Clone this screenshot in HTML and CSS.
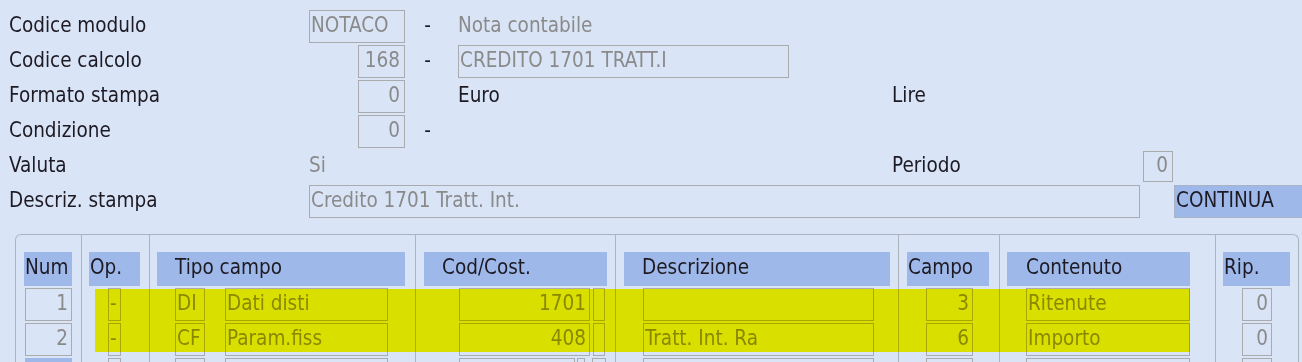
FILE: index.html
```html
<!DOCTYPE html>
<html>
<head>
  <link rel="stylesheet" href="styles.css">
</head>
<body>

<div class="form">
  <div class="lbl">Codice modulo</div>
  <div class="fld wide">NOTACO</div>
  <div class="dash">-</div>
  <div class="val">Nota contabile</div>
  <div></div><div></div><div></div>

  <div class="lbl">Codice calcolo</div>
  <div class="fld num">168</div>
  <div class="dash">-</div>
  <div class="fld desc">CREDITO 1701 TRATT.I</div>
  <div></div><div></div><div></div>

  <div class="lbl">Formato stampa</div>
  <div class="fld num">0</div>
  <div></div>
  <div class="lbl">Euro</div>
  <div class="lbl">Lire</div>
  <div></div><div></div>

  <div class="lbl">Condizione</div>
  <div class="fld num">0</div>
  <div class="dash">-</div>
  <div></div><div></div><div></div><div></div>

  <div class="lbl">Valuta</div>
  <div class="val">Si</div>
  <div></div><div></div>
  <div class="lbl">Periodo</div>
  <div class="fld small">0</div>
  <div></div>

  <div class="lbl">Descriz. stampa</div>
  <div class="fld long">Credito 1701 Tratt. Int.</div>
  <div class="btn">CONTINUA</div>
</div>

<div class="grid">
  <div class="col c1">
    <div class="hd">Num</div>
    <div class="row"><div class="fld num w47">1</div></div>
    <div class="row"><div class="fld num w47">2</div></div>
    <div class="row"><div class="fld num w47 sel"></div></div>
  </div>
  <div class="col c2">
    <div class="hd">Op.</div>
    <div class="row"><div class="fld w13">-</div></div>
    <div class="row"><div class="fld w13">-</div></div>
    <div class="row"><div class="fld w13"></div></div>
  </div>
  <div class="col c3">
    <div class="hd pad">Tipo campo</div>
    <div class="row"><div class="fld w30">DI</div><div class="fld w163 gap20">Dati disti</div></div>
    <div class="row"><div class="fld w30">CF</div><div class="fld w163 gap20">Param.fiss</div></div>
    <div class="row"><div class="fld w30"></div><div class="fld w163 gap20"></div></div>
  </div>
  <div class="col c4">
    <div class="hd pad">Cod/Cost.</div>
    <div class="row"><div class="fld num w131">1701</div><div class="fld w12 gap3"></div></div>
    <div class="row"><div class="fld num w131">408</div><div class="fld w12 gap3"></div></div>
    <div class="row"><div class="fld num w116"></div><div class="fld w8 gap2"></div><div class="fld w14 gap7"></div></div>
  </div>
  <div class="col c5">
    <div class="hd pad">Descrizione</div>
    <div class="row"><div class="fld w231"></div></div>
    <div class="row"><div class="fld w231">Tratt. Int. Ra</div></div>
    <div class="row"><div class="fld w231"></div></div>
  </div>
  <div class="col c6">
    <div class="hd">Campo</div>
    <div class="row"><div class="fld num w47">3</div></div>
    <div class="row"><div class="fld num w47">6</div></div>
    <div class="row"><div class="fld num w47"></div></div>
  </div>
  <div class="col c7">
    <div class="hd pad">Contenuto</div>
    <div class="row"><div class="fld w164">Ritenute</div></div>
    <div class="row"><div class="fld w164">Importo</div></div>
    <div class="row"><div class="fld w164"></div></div>
  </div>
  <div class="col c8">
    <div class="hd">Rip.</div>
    <div class="row"><div class="fld num w30">0</div></div>
    <div class="row"><div class="fld num w30">0</div></div>
    <div class="row"><div class="fld num w30"></div></div>
  </div>
  <div class="highlight"></div>
</div>

</body>
</html>
```
FILE: styles.css
```css
* {box-sizing: border-box}

body {
  margin: 0;
  padding: 9px 0 0 9px;
  background: #d9e5f7;
  font-family: "DejaVu Sans Condensed", "DejaVu Sans", sans-serif;
  font-size: 20.5px;
  color: #1e1a24;
  overflow: hidden;
}

.form {
  display: grid;
  grid-template-columns: 300px 96px 53px 434px 251px 31px 128px;
  grid-auto-rows: 35px;
  align-items: center;
}

.lbl {
  white-space: nowrap;
  padding-bottom: 4px;
}

.dash, .val {
  padding-bottom: 4px;
}

.dash {
  text-align: center;
  padding-right: 8px;
}

.val {
  color: #8a8a8a;
  white-space: nowrap;
}

.fld {
  height: 33px;
  line-height: 29px;
  border: 1px solid #a9abae;
  color: #8a8a8a;
  padding: 0 4px 0 1px;
  white-space: nowrap;
  overflow: hidden;
}

.num {
  text-align: right;
}

.form .num {
  width: 47px;
  justify-self: end;
}

.wide {
  width: 96px;
}

.desc {
  width: 331px;
}

.small {
  width: 30px;
  height: 31px;
  line-height: 27px;
  text-align: right;
}

.long {
  grid-column: 2 / 6;
  width: 831px;
}

.btn {
  grid-column: 7;
  height: 33px;
  line-height: 29px;
  background: #9eb9e9;
  border: 1px solid #a9b3c4;
  padding-left: 1px;
  margin-right: -9px;
  white-space: nowrap;
}

/* lower table */
.grid {
  position: relative;
  display: flex;
  margin: 15px 0 0 6px;
  width: 1284px;
  height: 140px;
  border: 1px solid #aeb4bd;
  border-bottom: none;
  border-radius: 6px 6px 0 0;
}

.col {
  padding-top: 17px;
  border-left: 1px solid #aeb4bd;
}

.c1 {border-left: none; width: 65px; padding-left: 8px}
.c2 {width: 68px; padding-left: 7px}
.c3 {width: 266px; padding-left: 7px}
.c4 {width: 200px; padding-left: 8px}
.c5 {width: 283px; padding-left: 8px}
.c6 {width: 101px; padding-left: 8px}
.c7 {width: 216px; padding-left: 7px}
.c8 {flex: 1; padding-left: 7px}

.hd {
  height: 34px;
  line-height: 31px;
  background: #9eb9e9;
  padding-left: 1px;
  white-space: nowrap;
}

.c1 .hd {width: 48px}
.c2 .hd {width: 51px}
.c3 .hd {width: 248px}
.c4 .hd {width: 183px}
.c5 .hd {width: 266px}
.c6 .hd {width: 82px}
.c7 .hd {width: 183px}
.c8 .hd {width: 67px}

.hd.pad {padding-left: 18px}
.c7 .hd.pad {padding-left: 19px}

.row {
  display: flex;
  margin-top: 2px;
}

.c1 .row {padding-left: 1px}
.c2 .row, .c5 .row, .c6 .row, .c7 .row, .c8 .row {padding-left: 19px}
.c3 .row {padding-left: 18px}
.c4 .row {padding-left: 35px}

.row .fld {padding: 0 3px 0 1px}

.w8 {width: 8px}
.w12 {width: 12px}
.w13 {width: 13px}
.w14 {width: 14px}
.w30 {width: 30px}
.w47 {width: 47px}
.w116 {width: 116px}
.w131 {width: 131px}
.w163 {width: 163px}
.w164 {width: 164px}
.w231 {width: 231px}

.gap2 {margin-left: 2px}
.gap3 {margin-left: 3px}
.gap7 {margin-left: 7px}
.gap20 {margin-left: 20px}

.sel {
  background: #9eb9e9;
  border-color: #9eb9e9;
}

.highlight {
  position: absolute;
  left: 79px;
  top: 54px;
  width: 1095px;
  height: 63px;
  background: #fffa00;
  mix-blend-mode: multiply;
}
```
